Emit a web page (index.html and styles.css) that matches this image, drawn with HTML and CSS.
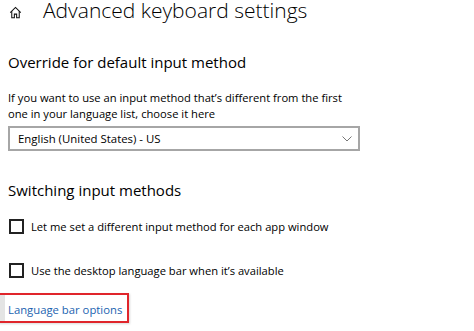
FILE: index.html
```html
<!DOCTYPE html>
<html>
<head>
<meta charset="utf-8">
<link rel="stylesheet" href="styles.css">
</head>
<body>
<div class="page">
  <div class="header">
    <svg class="home" viewBox="0 0 16 16" width="13" height="13">
      <path d="M1.5 8.2 L8 1.8 L14.5 8.2" fill="none" stroke="#111" stroke-width="1.3"/>
      <path d="M3.4 6.6 V14.4 H6.6 V10 H9.4 V14.4 H12.6 V6.6" fill="none" stroke="#111" stroke-width="1.3"/>
    </svg>
    <h1 class="title">Advanced keyboard settings</h1>
  </div>
  <h2 class="section first">Override for default input method</h2>
  <p class="desc">If you want to use an input method that’s different from the first one in your language list, choose it here</p>
  <div class="select">
    <span class="select-text">English (United States) - US</span>
    <svg class="chev" viewBox="0 0 10 6" width="10" height="6">
      <path d="M0.5 0.5 L5 5 L9.5 0.5" fill="none" stroke="#777" stroke-width="1"/>
    </svg>
  </div>
  <h2 class="section second">Switching input methods</h2>
  <label class="check row1"><span class="box"></span><span class="label">Let me set a different input method for each app window</span></label>
  <label class="check row2"><span class="box"></span><span class="label">Use the desktop language bar when it’s available</span></label>
  <div class="linkbox"><a class="link">Language bar options</a></div>
</div>
</body>
</html>
```
FILE: styles.css
```css
html, body {
  margin: 0;
  padding: 0;
  background: #fff;
}
body {
  font-family: "Open Sans", "Noto Sans", sans-serif;
  color: #000;
  width: 474px;
  height: 331px;
  overflow: hidden;
}
.page {
  padding-left: 8px;
  display: flex;
  flex-direction: column;
  align-items: flex-start;
}
.header {
  display: flex;
  align-items: center;
  height: 20px;
}
.home {
  margin-left: 1px;
  margin-right: 21px;
  margin-top: 5px;
}
.title {
  margin: 0;
  font-size: 21px;
  font-weight: 300;
  line-height: 20px;
  white-space: nowrap;
}
.section {
  margin: 0;
  font-size: 15px;
  font-weight: 400;
  line-height: 20px;
  white-space: nowrap;
}
.section.first { margin-top: 32px; }
.section.second { margin-top: 29px; }
.desc {
  margin: 18px 0 0 0;
  font-size: 11.2px;
  line-height: 16px;
  width: 345px;
}
.select {
  margin-top: 4px;
  box-sizing: border-box;
  width: 352px;
  height: 25px;
  border: 2px solid #a6a6a6;
  display: flex;
  align-items: center;
  justify-content: space-between;
  padding: 0 6px 0 8px;
}
.select-text {
  font-size: 11.4px;
}
.chev {
  margin-top: 1px;
}
.check {
  display: flex;
  align-items: center;
  height: 15px;
}
.row1 { margin-top: 19px; }
.row2 { margin-top: 29px; }
.box {
  box-sizing: border-box;
  width: 15px;
  height: 15px;
  border: 2px solid #222;
  margin-left: 1px;
  margin-right: 7px;
}
.label {
  font-size: 11.2px;
  white-space: nowrap;
}
.linkbox {
  margin-top: 15px;
  margin-left: -10px;
  box-sizing: border-box;
  width: 131px;
  height: 30px;
  border: 2px solid #e0252b;
  display: flex;
  align-items: center;
  padding-left: 8px;
  padding-top: 3px;
  background: linear-gradient(to right, #e4e4e4 0, #e4e4e4 5px, #fff 5px);
  box-shadow: 1px 1px 2px rgba(0,0,0,0.15);
}
.link {
  color: #1b63b0;
  font-size: 11.3px;
  white-space: nowrap;
}
```
